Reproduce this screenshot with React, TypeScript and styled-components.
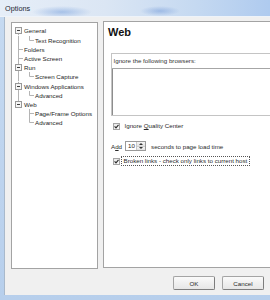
import React from 'react';
import styled, { createGlobalStyle } from 'styled-components';

const Global = createGlobalStyle`
  html, body { margin: 0; padding: 0; overflow: hidden; background: #bcd3ee; }
  body { font-family: "Liberation Sans", Arial, sans-serif; }
`;

const Screen = styled.div`
  width: 270px;
  height: 300px;
  overflow: hidden;
  display: flex;
  flex-direction: column;
  background: linear-gradient(180deg, #c6daf1 0%, #b7cfec 100%);
`;

const TitleBar = styled.div`
  flex: none;
  height: 17px;
  width: 300px;
  display: flex;
  align-items: center;
  padding-left: 5px;
  box-sizing: border-box;
  font-size: 7.3px;
  color: #1d2633;
  background:
    radial-gradient(ellipse 30px 6px at 62px 12px, rgba(120,160,220,0.55), rgba(120,160,220,0) 100%),
    radial-gradient(ellipse 20px 5px at 160px 11px, rgba(110,150,215,0.5), rgba(110,150,215,0) 100%),
    linear-gradient(90deg, #e6eef8 0%, #dbe6f4 35%, #c5d9f1 65%, #a6c5ee 100%);
  border-bottom: 1px solid #eef3f9;
`;

const Frame = styled.div`
  flex: 1;
  display: flex;
  width: 300px;
  padding: 0 0 5px 4px;
  box-sizing: border-box;
`;

const Client = styled.div`
  flex: 1;
  display: flex;
  flex-direction: column;
  background: #f0f0f0;
  border-left: 1px solid #a9b9cb;
  padding: 4px 0 0 6px;
`;

const Panels = styled.div`
  display: flex;
  align-items: flex-start;
  gap: 5px;
  padding-right: 8px;
`;

const TreePanel = styled.div`
  width: 87px;
  height: 247px;
  margin-top: 1px;
  box-sizing: border-box;
  background: #ffffff;
  border: 1px solid #a3a3a3;
  padding: 3.4px 0 0 1px;
  display: flex;
  flex-direction: column;
`;

const TreeRow = styled.div`
  display: flex;
  align-items: center;
  height: 9.2px;
`;

const TreeLabel = styled.span`
  font-size: 6.2px;
  line-height: 9.2px;
  color: #262626;
  white-space: nowrap;
`;

const GutterSvg = styled.svg`
  display: block;
  flex: none;
`;

const Content = styled.div`
  flex: 1;
  height: 247px;
  box-sizing: border-box;
  background: #ffffff;
  border: 1px solid #a3a3a3;
  padding: 4px 0 0 4px;
  display: flex;
  flex-direction: column;
`;

const Heading = styled.div`
  font-size: 11px;
  font-weight: bold;
  line-height: 13px;
  color: #111;
`;

const Section = styled.div`
  padding-left: 3px;
  display: flex;
  flex-direction: column;
`;

const ListGroup = styled.div`
  margin-top: 14px;
  height: 63px;
  box-sizing: border-box;
  border: 1px solid #c4c4c4;
  border-right: none;
  display: flex;
  flex-direction: column;
`;

const ListHeader = styled.div`
  height: 14px;
  line-height: 14px;
  padding-left: 1.5px;
  font-size: 6.2px;
  color: #333;
  border-bottom: 1px solid #a6a6a6;
`;

const ListBody = styled.div`
  flex: 1;
  border-left: 1px solid #8d8d8d;
  background: #fff;
`;

const OptionRow = styled.div<{ $mt: number; $h: number }>`
  display: flex;
  align-items: center;
  height: ${p => p.$h}px;
  margin-top: ${p => p.$mt}px;
  font-size: 6.2px;
  color: #2a2a2a;
  white-space: nowrap;
`;

const CheckBox = styled.span`
  flex: none;
  width: 7px;
  height: 7px;
  margin-left: 2px;
  box-sizing: border-box;
  border: 1px solid #a5a5a5;
  background: linear-gradient(135deg, #e8e8e8, #fdfdfd);
  display: flex;
  align-items: center;
  justify-content: center;
`;

const CheckLabel = styled.span<{ $focus?: boolean }>`
  margin-left: ${p => (p.$focus ? 1 : 2)}px;
  padding: 0 1.5px;
  line-height: 8px;
  border: 1px dotted ${p => (p.$focus ? '#555' : 'transparent')};
`;

const Accel = styled.span`
  text-decoration: underline;
`;

const Spin = styled.span`
  display: flex;
  width: 21px;
  height: 10px;
  margin: 0 5px 0 3px;
  box-sizing: border-box;
  border: 1px solid #9a9a9a;
  background: #fff;
`;

const SpinText = styled.span`
  flex: 1;
  padding-left: 2px;
  line-height: 8px;
  font-size: 6.2px;
`;

const SpinArrows = styled.span`
  width: 8px;
  display: flex;
  flex-direction: column;
  border-left: 1px solid #c9c9c9;
`;

const SpinHalf = styled.span`
  flex: 1;
  display: flex;
  align-items: center;
  justify-content: center;
  background: linear-gradient(#f5f5f5, #e2e2e2);
  border-bottom: 1px solid #cfcfcf;
  &:last-child { border-bottom: none; }
`;

const Buttons = styled.div`
  display: flex;
  justify-content: flex-end;
  gap: 7px;
  margin-top: 7px;
  padding-right: 36px;
`;

const Button = styled.div`
  width: 42px;
  height: 14px;
  box-sizing: border-box;
  border: 1px solid #a4a4a4;
  border-right-color: #7d7d7d;
  border-bottom-color: #7d7d7d;
  border-radius: 2px;
  background: linear-gradient(#fafafa, #e6e6e6);
  font-size: 6.2px;
  color: #2a2a2a;
  display: flex;
  align-items: center;
  justify-content: center;
`;

type VLine = 'none' | 'full' | 'top' | 'bottom';

const LINE = '#b4b4b4';

const Connector = ({ v, h, expander }: { v: VLine; h?: boolean; expander?: boolean }) => {
  const W = 11;
  const H = 9.2;
  const cx = 5.5;
  const cy = 4.5;
  const y1 = v === 'bottom' ? cy : 0;
  const y2 = v === 'top' ? cy : H;
  return (
    <GutterSvg width={W} height={H} viewBox={`0 0 ${W} ${H}`}>
      {v !== 'none' && <line x1={cx} x2={cx} y1={y1} y2={y2} stroke={LINE} strokeWidth={1} />}
      {h && <line x1={cx} x2={W - 1} y1={cy} y2={cy} stroke={LINE} strokeWidth={1} />}
      {expander && (
        <>
          <rect x={2.5} y={1.5} width={6} height={6} fill="#f6f6f6" stroke="#999999" strokeWidth={1} />
          <line x1={4} x2={7} y1={4.5} y2={4.5} stroke="#3a3a3a" strokeWidth={1} />
        </>
      )}
    </GutterSvg>
  );
};

type Node = {
  label: string;
  level: 0 | 1;
  root: VLine;
  child?: VLine;
  exp?: boolean;
};

const tree: Node[] = [
  { label: 'General', level: 0, root: 'bottom', exp: true },
  { label: 'Text Recognition', level: 1, root: 'full', child: 'top' },
  { label: 'Folders', level: 0, root: 'full' },
  { label: 'Active Screen', level: 0, root: 'full' },
  { label: 'Run', level: 0, root: 'full', exp: true },
  { label: 'Screen Capture', level: 1, root: 'full', child: 'top' },
  { label: 'Windows Applications', level: 0, root: 'full', exp: true },
  { label: 'Advanced', level: 1, root: 'full', child: 'top' },
  { label: 'Web', level: 0, root: 'top', exp: true },
  { label: 'Page/Frame Options', level: 1, root: 'none', child: 'full' },
  { label: 'Advanced', level: 1, root: 'none', child: 'top' },
];

const Check = () => (
  <svg width="5" height="5" viewBox="0 0 5 5">
    <path d="M0.6 2.4 L2 3.9 L4.5 0.8" fill="none" stroke="#2b2b2b" strokeWidth="1.1" />
  </svg>
);

const Arrow = ({ up }: { up?: boolean }) => (
  <svg width="4" height="2" viewBox="0 0 4 2">
    <path d={up ? 'M0 2 L2 0 L4 2 Z' : 'M0 0 L4 0 L2 2 Z'} fill="#333" />
  </svg>
);

export default function App() {
  return (
    <>
      <Global />
      <Screen>
        <TitleBar>Options</TitleBar>
        <Frame>
          <Client>
            <Panels>
              <TreePanel>
                {tree.map((n, i) => (
                  <TreeRow key={i}>
                    <Connector v={n.root} h={n.level === 0 && !n.exp} expander={n.exp} />
                    {n.level === 1 && <Connector v={n.child || 'none'} h />}
                    <TreeLabel>{n.label}</TreeLabel>
                  </TreeRow>
                ))}
              </TreePanel>
              <Content>
                <Heading>Web</Heading>
                <Section>
                  <ListGroup>
                    <ListHeader>Ignore the following browsers:</ListHeader>
                    <ListBody />
                  </ListGroup>
                  <OptionRow $mt={5} $h={10}>
                    <CheckBox>
                      <Check />
                    </CheckBox>
                    <CheckLabel>
                      Ignore <Accel>Q</Accel>uality Center
                    </CheckLabel>
                  </OptionRow>
                  <OptionRow $mt={10} $h={10}>
                    <span>
                      A<Accel>d</Accel>d
                    </span>
                    <Spin>
                      <SpinText>10</SpinText>
                      <SpinArrows>
                        <SpinHalf>
                          <Arrow up />
                        </SpinHalf>
                        <SpinHalf>
                          <Arrow />
                        </SpinHalf>
                      </SpinArrows>
                    </Spin>
                    <span>seconds to page load time</span>
                  </OptionRow>
                  <OptionRow $mt={5} $h={10}>
                    <CheckBox>
                      <Check />
                    </CheckBox>
                    <CheckLabel $focus>Broken links - check only links to current host</CheckLabel>
                  </OptionRow>
                </Section>
              </Content>
            </Panels>
            <Buttons>
              <Button>OK</Button>
              <Button>Cancel</Button>
            </Buttons>
          </Client>
        </Frame>
      </Screen>
    </>
  );
}
